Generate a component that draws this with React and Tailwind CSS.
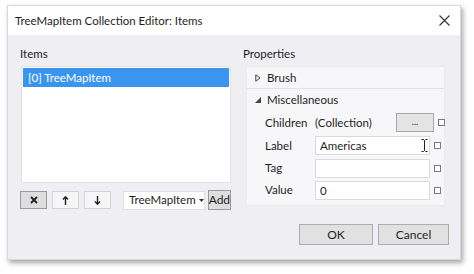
const font = { fontFamily: 'Lato, "Noto Sans", sans-serif' };

const Square = () => (
  <div className="w-[7px] h-[7px] border border-[#7a7a7a] bg-white shrink-0" />
);

const PropRow = ({ label, children, h = "h-[23px]" }) => (
  <div className={`flex items-center ${h} pl-[18px]`}>
    <div className="w-[50px] shrink-0">{label}</div>
    <div className="flex items-center gap-[4px]">
      {children}
      <Square />
    </div>
  </div>
);

const SmallBtn = ({ children, pressed }) => (
  <div
    className={`w-[27px] h-[18px] flex items-center justify-center border ${
      pressed ? "bg-[#dedede] border-[#9a9a9a]" : "bg-[#f6f6f6] border-[#d4d4d4]"
    }`}
  >
    {children}
  </div>
);

export default function App() {
  return (
    <div className="w-[474px] h-[274px] bg-white pt-[5px] pl-[7px] text-[11.5px] text-[#1e1e1e]" style={font}>
      <div className="w-[454px] h-[255px] bg-[#efeef3] border border-[#d8d8d8] shadow-[2px_3px_5px_rgba(0,0,0,0.35)] flex flex-col">
        {/* Title bar */}
        <div className="h-[29px] bg-white flex items-center justify-between pl-[7px] pr-[9px] shrink-0">
          <span className="leading-none text-[11.5px]">TreeMapItem Collection Editor: Items</span>
          <svg width="11" height="11" viewBox="0 0 11 11" className="mr-[1px]">
            <path d="M0.5 0.5 L10.5 10.5 M10.5 0.5 L0.5 10.5" stroke="#333" strokeWidth="1.1" />
          </svg>
        </div>

        {/* Body */}
        <div className="flex pl-[12px] pt-[9px] gap-[12px]">
          {/* Left */}
          <div className="w-[211px] flex flex-col">
            <div className="h-[22px] leading-[19px]">Items</div>
            <div className="ml-[1px] h-[117px] bg-white border border-[#e3e3e3] p-[1px]">
              <div className="h-[19px] bg-[#3a95f0] text-white pl-[5px] leading-[19px]">[0] TreeMapItem</div>
            </div>
            <div className="flex items-center mt-[7px]">
              <div className="flex gap-[5px]">
                <SmallBtn pressed>
                  <svg width="8" height="8" viewBox="0 0 8 8">
                    <path d="M1 1 L7 7 M7 1 L1 7" stroke="#222" strokeWidth="1.8" />
                  </svg>
                </SmallBtn>
                <SmallBtn>
                  <svg width="7" height="9" viewBox="0 0 7 9">
                    <path d="M3.5 1 V9 M1 3.5 L3.5 0.8 L6 3.5" stroke="#222" strokeWidth="1.4" fill="none" />
                  </svg>
                </SmallBtn>
                <SmallBtn>
                  <svg width="7" height="9" viewBox="0 0 7 9">
                    <path d="M3.5 0 V8 M1 5.5 L3.5 8.2 L6 5.5" stroke="#222" strokeWidth="1.4" fill="none" />
                  </svg>
                </SmallBtn>
              </div>
              <div className="ml-[12px] w-[82px] h-[19px] bg-white border border-[#e0e0e0] flex items-center pl-[5px] gap-[3px]">
                <span>TreeMapItem</span>
                <svg width="5" height="3" viewBox="0 0 5 3"><path d="M0 0 H5 L2.5 3 Z" fill="#333" /></svg>
              </div>
              <div className="ml-[3px] w-[26px] h-[20px] bg-[#dedede] border border-[#9a9a9a] flex items-center justify-center text-[12px]">
                Add
              </div>
            </div>
          </div>

          {/* Right */}
          <div className="w-[202px] flex flex-col">
            <div className="h-[22px] leading-[19px]">Properties</div>
            <div className="ml-[3px] w-[199px] h-[140px] bg-[#f7f7f9] border border-[#ebebee]">
              <div className="h-[22px] flex items-center pl-[8px] border-b border-[#e2e2e6]">
                <svg width="6" height="8" viewBox="0 0 6 8" className="mr-[6px]">
                  <path d="M0.8 0.8 L5 4 L0.8 7.2 Z" fill="none" stroke="#444" strokeWidth="1" />
                </svg>
                Brush
              </div>
              <div className="h-[22px] flex items-center pl-[8px]">
                <svg width="6" height="6" viewBox="0 0 6 6" className="mr-[6px]">
                  <path d="M6 0 V6 H0 Z" fill="#444" />
                </svg>
                Miscellaneous
              </div>
              <PropRow label="Children">
                <div className="w-[77px] shrink-0">(Collection)</div>
                <div className="w-[38px] h-[19px] bg-[#e4e4e4] border border-[#a8a8a8] flex items-center justify-center text-[9px] leading-none pb-[3px]">
                  ...
                </div>
              </PropRow>
              <PropRow label="Label">
                <div className="relative w-[115px] h-[19px] bg-white border border-[#dadada] pl-[4px] leading-[17px]">
                  Americas
                  <svg width="7" height="13" viewBox="0 0 7 13" className="absolute right-[1px] top-[2px]">
                    <path d="M0.5 0.5 H2.5 L3.5 1.5 L4.5 0.5 H6.5 M3.5 1.5 V11.5 M0.5 12.5 H2.5 L3.5 11.5 L4.5 12.5 H6.5" stroke="#222" strokeWidth="1" fill="none" />
                  </svg>
                </div>
              </PropRow>
              <PropRow label="Tag" h="h-[22px]">
                <div className="w-[115px] h-[19px] bg-white border border-[#dadada]" />
              </PropRow>
              <PropRow label="Value" h="h-[22px]">
                <div className="w-[115px] h-[19px] bg-white border border-[#dadada] pl-[4px] leading-[17px]">0</div>
              </PropRow>
            </div>
          </div>
        </div>

        {/* Footer */}
        <div className="flex justify-end gap-[5px] pr-[11px] mt-[14px]">
          <div className="w-[74px] h-[21px] bg-[#e1e1e1] border border-[#adadad] flex items-center justify-center text-[12px]">OK</div>
          <div className="w-[71px] h-[21px] bg-[#e1e1e1] border border-[#adadad] flex items-center justify-center text-[12px]">Cancel</div>
        </div>
      </div>
    </div>
  );
}
